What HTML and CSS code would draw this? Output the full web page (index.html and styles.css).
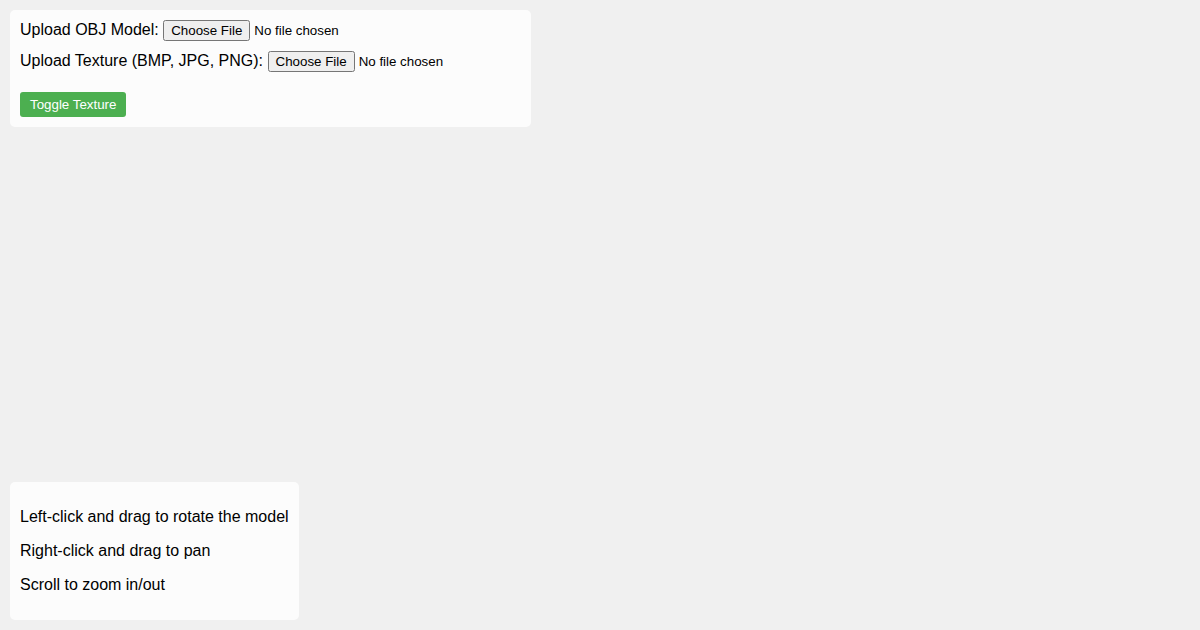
FILE: index.html
```html
<!DOCTYPE html>
<html lang="en">

<head>
  <meta charset="UTF-8">
  <meta name="viewport" content="width=device-width, initial-scale=1.0">
  <title>OBJ Viewer</title>
  <link rel="stylesheet" href="styles.css">
</head>

<body>
  <div class="viewport"></div>

  <div class="controls">
    <div class="row">
      <label for="objFile">Upload OBJ Model:</label>
      <input type="file" id="objFile" accept=".obj">
    </div>
    <div class="row">
      <label for="textureFile">Upload Texture (BMP, JPG, PNG):</label>
      <input type="file" id="textureFile" accept=".bmp,.jpg,.jpeg,.png">
    </div>
    <button id="toggleTexture">Toggle Texture</button>
  </div>

  <div class="instructions">
    <p>Left-click and drag to rotate the model</p>
    <p>Right-click and drag to pan</p>
    <p>Scroll to zoom in/out</p>
  </div>
</body>

</html>
```

FILE: styles.css
```css
body {
  margin: 0;
  overflow: hidden;
  font-family: "Liberation Sans", Arial, sans-serif;
  background-color: #f0f0f0;
}

.viewport {
  width: 100vw;
  height: 100vh;
  background-color: #f0f0f0;
}

.controls,
.instructions {
  position: absolute;
  left: 10px;
  padding: 10px;
  background-color: rgba(255, 255, 255, 0.8);
  border-radius: 5px;
  color: #000;
}

.controls {
  top: 10px;
  width: 501px;
}

.controls .row {
  margin-bottom: 10px;
}

.controls input {
  font-family: "Liberation Sans", Arial, sans-serif;
  font-size: 13.33px;
}

.controls button {
  margin-top: 10px;
  padding: 5px 10px;
  background-color: #4CAF50;
  color: #fff;
  border: none;
  border-radius: 3px;
  font-family: "Liberation Sans", Arial, sans-serif;
  font-size: 13.33px;
  cursor: pointer;
}

.instructions {
  bottom: 10px;
}
```
